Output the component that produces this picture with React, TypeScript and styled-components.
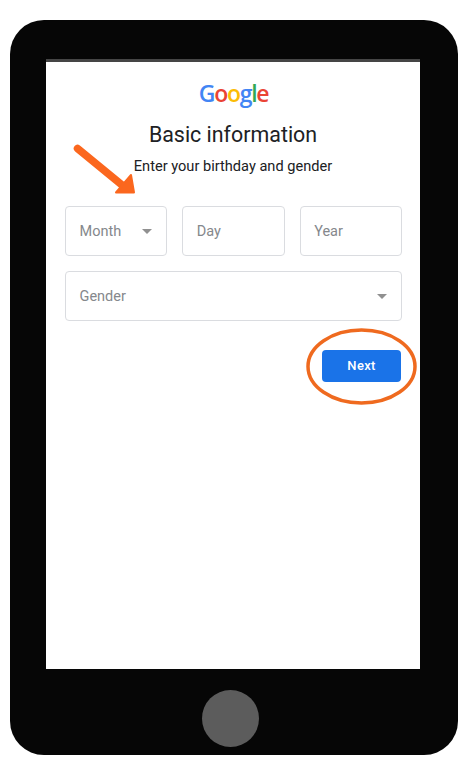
import styled, { createGlobalStyle } from 'styled-components';

const GlobalStyle = createGlobalStyle`
html, body {
  margin: 0;
  padding: 0;
  background: #ffffff;
}
* {
  box-sizing: border-box;
}
`;

const Phone = styled.div`
width: 448px;
height: 735px;
margin: 20px 0 0 10px;
padding: 39px 0 0 36px;
background-color: #060606;
border-radius: 34px;
display: flex;
flex-direction: column;
align-items: flex-start;
`;

const Screen = styled.main`
position: relative;
width: 374px;
height: 610px;
padding: 18px 18px 0 19px;
background-color: #ffffff;
border-top: 3px solid #454545;
display: flex;
flex-direction: column;
align-items: center;
font-family: Roboto, "Liberation Sans", sans-serif;
`;

const HomeButton = styled.div`
width: 57px;
height: 57px;
margin: 21px 0 0 156px;
border-radius: 50%;
background-color: #5c5c5c;
`;

const Logo = styled.div`
height: 29px;
margin-top: -1px;
font-family: "Open Sans", "Liberation Sans", sans-serif;
font-size: 23px;
font-weight: 600;
line-height: 29px;
letter-spacing: -1.3px;
`;

const LogoLetter = styled.span<{ $color: string }>`
color: ${(p) => p.$color};
`;

const Title = styled.h1`
margin: 13px 1px 0 0;
font-size: 21.4px;
font-weight: 400;
line-height: 28px;
color: #202124;
`;

const Subtitle = styled.p`
margin: 7px 1px 0 0;
font-size: 14.6px;
line-height: 20px;
color: #202124;
`;

const DateRow = styled.div`
width: 100%;
margin-top: 30px;
display: grid;
grid-template-columns: repeat(3, 1fr);
gap: 15px;
`;

const Field = styled.div<{ $top?: number }>`
width: 100%;
height: 50px;
margin-top: ${(p) => p.$top ?? 0}px;
padding: 1px 14px 0 13.5px;
display: flex;
align-items: center;
justify-content: space-between;
border: 1px solid #dadce0;
border-radius: 4px;
color: #85888c;
font-size: 14.5px;
`;

const Caret = styled.span`
width: 0;
height: 0;
border-left: 5.5px solid transparent;
border-right: 5.5px solid transparent;
border-top: 5.5px solid #909090;
`;

const Actions = styled.div`
width: 100%;
margin-top: 29px;
padding-right: 1px;
display: flex;
justify-content: flex-end;
`;

const NextButton = styled.button`
width: 79px;
height: 32px;
padding: 0 0 2px;
border: none;
border-radius: 4px;
background-color: #1a73e8;
color: #ffffff;
font-family: Roboto, "Liberation Sans", sans-serif;
font-size: 13px;
font-weight: 500;
letter-spacing: 0.3px;
`;

const Annotations = styled.svg`
position: absolute;
top: -3px;
left: 0;
pointer-events: none;
`;

const GOOGLE: [string, string][] = [
  ['G', '#4285f4'],
  ['o', '#ea4335'],
  ['o', '#fbbc05'],
  ['g', '#4285f4'],
  ['l', '#34a853'],
  ['e', '#ea4335'],
];

function App() {
  return (
    <>
      <GlobalStyle />
      <Phone>
        <Screen>
          <Logo>
            {GOOGLE.map(([letter, color], i) => (
              <LogoLetter key={i} $color={color}>{letter}</LogoLetter>
            ))}
          </Logo>
          <Title>Basic information</Title>
          <Subtitle>Enter your birthday and gender</Subtitle>
          <DateRow>
            <Field>Month<Caret /></Field>
            <Field>Day</Field>
            <Field>Year</Field>
          </DateRow>
          <Field $top={15}>Gender<Caret /></Field>
          <Actions>
            <NextButton type="button">Next</NextButton>
          </Actions>
          <Annotations width="374" height="400" viewBox="46 59 374 400" fill="none">
            <path d="M77.5 148.5 L122 185" stroke="#fb671e" strokeWidth="7.5" strokeLinecap="round" />
            <path d="M131 175 L134 192.5 L116 192.5 Z" fill="#fb671e" stroke="#fb671e" strokeWidth="2" strokeLinejoin="round" />
            <ellipse cx="361.5" cy="366.5" rx="53.5" ry="36.5" stroke="#ef6a1f" strokeWidth="3.5" />
          </Annotations>
        </Screen>
        <HomeButton />
      </Phone>
    </>
  );
}

export default App;
